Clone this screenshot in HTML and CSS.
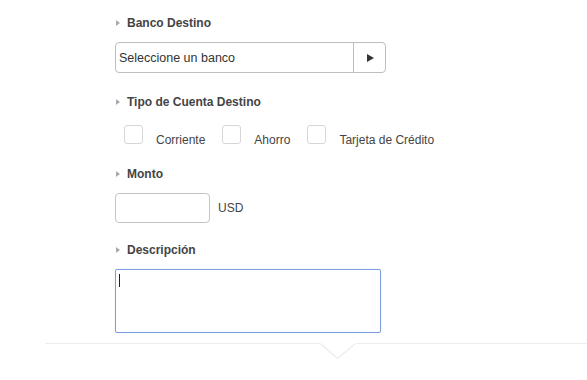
FILE: index.html
```html
<!DOCTYPE html>
<html lang="es">
<head>
<meta charset="utf-8">
<link rel="stylesheet" href="styles.css">
</head>
<body>
<form class="form">
  <div class="field">
    <div class="label"><span class="tri"></span>Banco Destino</div>
    <div class="select">
      <span class="select-text">Seleccione un banco</span>
      <span class="select-btn"><span class="arrow"></span></span>
    </div>
  </div>
  <div class="field field-checks">
    <div class="label"><span class="tri"></span>Tipo de Cuenta Destino</div>
    <div class="checks">
      <label class="check"><span class="box"></span><span class="check-text">Corriente</span></label>
      <label class="check"><span class="box"></span><span class="check-text">Ahorro</span></label>
      <label class="check"><span class="box"></span><span class="check-text">Tarjeta de Crédito</span></label>
    </div>
  </div>
  <div class="field field-amount">
    <div class="label"><span class="tri"></span>Monto</div>
    <div class="amount">
      <span class="input"></span>
      <span class="unit">USD</span>
    </div>
  </div>
  <div class="field field-last">
    <div class="label"><span class="tri"></span>Descripción</div>
    <div class="textarea"><span class="caret"></span></div>
  </div>
</form>
<div class="divider">
  <svg class="notch" width="37" height="18" viewBox="0 0 37 18">
    <rect x="0" y="0" width="37" height="2" fill="#fff"/>
    <polyline points="0.5,0.5 17.5,15.5 35.5,0.5" fill="none" stroke="#ececec" stroke-width="1.3"/>
  </svg>
</div>
</body>
</html>
```
FILE: styles.css
```css
html, body {
  margin: 0;
  padding: 0;
  background: #fff;
}
body {
  font-family: "Liberation Sans", Arial, sans-serif;
  color: #333;
  width: 587px;
  height: 380px;
  overflow: hidden;
}
.form {
  padding: 14px 0 0 115px;
}
.field {
  margin-bottom: 20px;
}
.field-checks,
.field-amount {
  margin-bottom: 18px;
}
.field-last {
  margin-bottom: 0;
}
.label {
  display: flex;
  align-items: center;
  height: 17px;
  font-size: 12px;
  font-weight: bold;
  color: #444;
  margin-bottom: 11px;
}
.tri {
  width: 0;
  height: 0;
  border-top: 3.5px solid transparent;
  border-bottom: 3.5px solid transparent;
  border-left: 4px solid #aaa;
  margin: 0 7px 0 1px;
}
.select {
  display: flex;
  width: 269px;
  height: 29px;
  border: 1px solid #bdbdbd;
  border-radius: 4px;
}
.select-text {
  flex: 1;
  display: flex;
  align-items: center;
  padding-left: 3px;
  font-size: 12.5px;
  color: #333;
}
.select-btn {
  width: 31px;
  border-left: 1px solid #bdbdbd;
  display: flex;
  align-items: center;
  justify-content: center;
}
.arrow {
  width: 0;
  height: 0;
  border-top: 4px solid transparent;
  border-bottom: 4px solid transparent;
  border-left: 7px solid #333;
  margin-left: 1px;
}
.field-checks .label {
  margin-bottom: 15px;
}
.checks {
  display: flex;
  height: 22px;
  padding-left: 9px;
}
.check {
  display: flex;
  align-items: flex-start;
}
.box {
  width: 17px;
  height: 17px;
  border: 1px solid #d6d6d6;
  border-radius: 3px;
  margin-right: 13px;
}
.check-text {
  font-size: 12px;
  color: #444;
  margin-top: 8px;
  margin-right: 17px;
}
.amount {
  display: flex;
  align-items: center;
}
.input {
  display: block;
  width: 93px;
  height: 28px;
  border: 1px solid #c4c4c4;
  border-radius: 4px;
  margin-right: 8px;
}
.unit {
  font-size: 12px;
  color: #444;
}
.textarea {
  width: 264px;
  height: 62px;
  border: 1px solid #7d9fe0;
  border-radius: 2px;
  box-shadow: 0 0 1px #a9c1ee;
}
.caret {
  display: block;
  width: 1px;
  height: 13px;
  background: #222;
  margin: 4px 0 0 3px;
}
.divider {
  position: relative;
  margin: 10px 0 0 45px;
  border-top: 1px solid #ececec;
}
.notch {
  position: absolute;
  left: 275px;
  top: -1px;
}
```
